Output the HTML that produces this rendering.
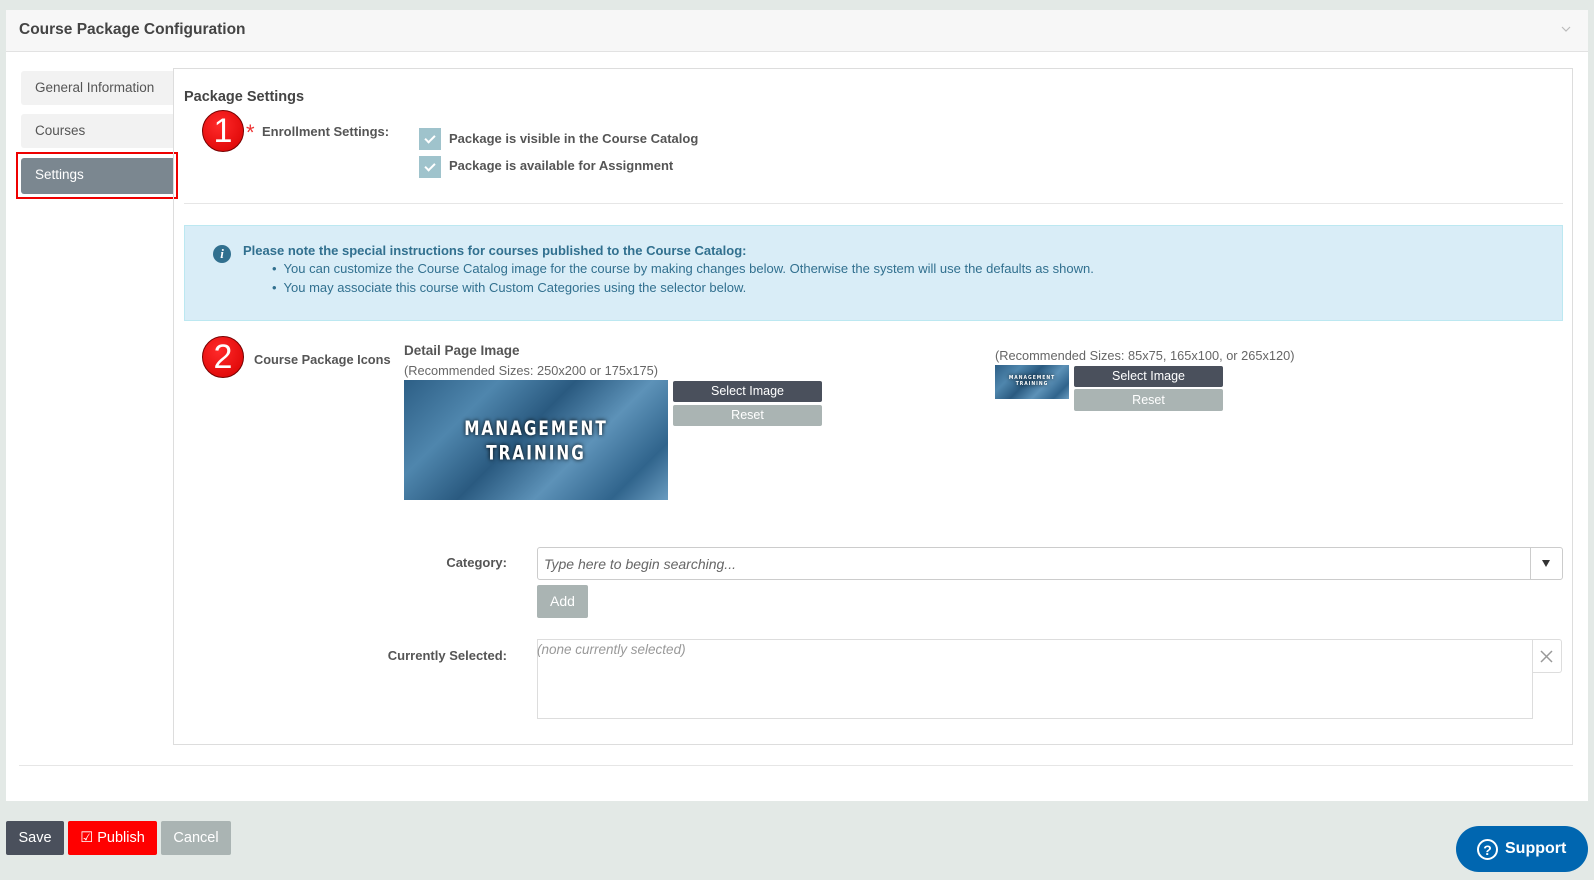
<!DOCTYPE html>
<html><head><meta charset="utf-8"><style>
*{box-sizing:border-box;margin:0;padding:0}
body{width:1594px;height:880px;background:#e3e9e6;font-family:"Liberation Sans",Arial,sans-serif;position:relative;overflow:hidden;color:#555}
.a{position:absolute}
.panel{left:6px;top:10px;width:1582px;height:791px;background:#fff}
.hdr{left:6px;top:10px;width:1582px;height:42px;background:#f7f7f7;border-bottom:1px solid #e2e2e2}
.b{font-weight:bold}
.tab{left:21px;width:152px;height:34px;background:#f2f2f2;font-size:13px;color:#555;padding:9px 0 0 14px;border-radius:3px 0 0 3px}
.cb{width:22px;height:22px;background:#9fc3cc}
.cb:after{content:"";position:absolute;left:8px;top:5px;width:4px;height:8px;border:solid #fff;border-width:0 2px 2px 0;transform:rotate(45deg)}
.circ{width:42px;height:42px;border-radius:50%;background:radial-gradient(circle at 40% 35%,#ff2a2a,#d80000);border:1.5px solid #700;color:#fff;font-size:34px;text-align:center;line-height:40px;font-family:"Liberation Sans",sans-serif}
.btn{color:#fff;font-size:12.5px;text-align:center;border-radius:2px}
.img{background:linear-gradient(135deg,#2d5f86 0%,#4f86ad 25%,#2a5a80 45%,#5d92b8 65%,#30648c 85%,#6a9cc0 100%);overflow:hidden}
.img .t{position:absolute;width:100%;text-align:center;color:#fff;font-family:"DejaVu Sans Condensed","Liberation Sans Narrow",sans-serif;font-weight:bold;text-shadow:0 0 4px #000}
</style></head><body>
<div class="a panel"></div>
<div class="a hdr"></div>
<div class="a b" style="left:19px;top:21px;font-size:15.5px;color:#444">Course Package Configuration</div>
<svg class="a" style="left:1561px;top:26px" width="10" height="7"><path d="M1 1l4 4 4-4" stroke="#bbb" fill="none" stroke-width="1.2"/></svg>

<div class="a tab" style="top:71px;font-size:13.5px">General Information</div>
<div class="a tab" style="top:114px;font-size:13.5px">Courses</div>
<div class="a tab" style="top:158px;background:#7b8790;color:#fff;height:36px;font-size:13.5px">Settings</div>
<div class="a" style="left:16px;top:152px;width:162px;height:47px;border:2px solid #e00"></div>

<div class="a" style="left:173px;top:68px;width:1400px;height:677px;border:1px solid #ddd"></div>
<div class="a b" style="left:184px;top:89px;font-size:14.5px;color:#444">Package Settings</div>
<div class="a circ" style="left:202px;top:110px">1</div>
<div class="a" style="left:246px;top:122px;color:#e33;font-size:22px;line-height:22px">*</div>
<div class="a b" style="left:262px;top:124px;font-size:13px;color:#555">Enrollment Settings:</div>
<div class="a cb" style="left:419px;top:128px"></div>
<div class="a b" style="left:449px;top:131px;font-size:13px;color:#555">Package is visible in the Course Catalog</div>
<div class="a cb" style="left:419px;top:156px"></div>
<div class="a b" style="left:449px;top:158px;font-size:13px;color:#555">Package is available for Assignment</div>
<div class="a" style="left:184px;top:203px;width:1379px;border-top:1px solid #e6e6e6"></div>

<div class="a" style="left:184px;top:225px;width:1379px;height:96px;background:#d9edf7;border:1px solid #bce8f1"></div>
<div class="a" style="left:213px;top:245px;width:18px;height:18px;border-radius:50%;background:#31708f;color:#fff;font:italic bold 13px 'Liberation Serif',serif;text-align:center;line-height:18px">i</div>
<div class="a b" style="left:243px;top:243px;font-size:13px;color:#31708f">Please note the special instructions for courses published to the Course Catalog:</div>
<div class="a" style="left:272px;top:261px;font-size:13px;color:#31708f">•&nbsp; You can customize the Course Catalog image for the course by making changes below. Otherwise the system will use the defaults as shown.</div>
<div class="a" style="left:272px;top:280px;font-size:13px;color:#31708f">•&nbsp; You may associate this course with Custom Categories using the selector below.</div>

<div class="a circ" style="left:202px;top:336px">2</div>
<div class="a b" style="left:254px;top:352px;font-size:12.8px;color:#555">Course Package Icons</div>
<div class="a b" style="left:404px;top:343px;font-size:13.5px;color:#555">Detail Page Image</div>
<div class="a" style="left:404px;top:363px;font-size:12.8px;color:#666">(Recommended Sizes: 250x200 or 175x175)</div>
<div class="a img" style="left:404px;top:380px;width:264px;height:120px"><div class="t" style="top:41px;font-size:17px;letter-spacing:2px;line-height:21px;transform:scaleY(1.15)">MANAGEMENT<br>TRAINING</div></div>
<div class="a btn" style="left:673px;top:381px;width:149px;height:21px;background:#4a505c;line-height:21px">Select Image</div>
<div class="a btn" style="left:673px;top:405px;width:149px;height:21px;background:#aab4b3;line-height:21px">Reset</div>

<div class="a" style="left:995px;top:348px;font-size:12.8px;color:#666">(Recommended Sizes: 85x75, 165x100, or 265x120)</div>
<div class="a img" style="left:995px;top:365px;width:74px;height:34px"><div class="t" style="top:10px;font-size:5px;letter-spacing:1px;line-height:6px">MANAGEMENT<br>TRAINING</div></div>
<div class="a btn" style="left:1074px;top:366px;width:149px;height:21px;background:#4a505c;line-height:21px">Select Image</div>
<div class="a btn" style="left:1074px;top:389px;width:149px;height:22px;background:#aab4b3;line-height:22px">Reset</div>

<div class="a b" style="left:400px;top:555px;width:107px;text-align:right;font-size:13px;color:#555">Category:</div>
<div class="a" style="left:537px;top:547px;width:1026px;height:33px;border:1px solid #ccc;border-radius:3px"></div>
<div class="a" style="left:1530px;top:547px;height:33px;border-left:1px solid #ccc"></div>
<div class="a" style="left:1542px;top:560px;width:0;height:0;border-left:4px solid transparent;border-right:4px solid transparent;border-top:7px solid #333"></div>
<div class="a" style="left:544px;top:556px;font-size:14px;font-style:italic;color:#666">Type here to begin searching...</div>
<div class="a btn" style="left:537px;top:585px;width:51px;height:33px;background:#aab4b3;line-height:33px;font-size:14px">Add</div>
<div class="a b" style="left:360px;top:648px;width:147px;text-align:right;font-size:13px;color:#555">Currently Selected:</div>
<div class="a" style="left:537px;top:639px;width:996px;height:80px;border:1px solid #ddd"></div>
<div class="a" style="left:537px;top:642px;font-size:13.5px;font-style:italic;color:#999">(none currently selected)</div>
<div class="a" style="left:1532px;top:639px;width:30px;height:34px;border:1px solid #ddd;border-left:none;border-radius:0 3px 3px 0"></div>
<svg class="a" style="left:1540px;top:650px" width="13" height="13"><path d="M1 1l11 11M12 1L1 12" stroke="#999" stroke-width="1.5"/></svg>
<div class="a" style="left:19px;top:765px;width:1554px;border-top:1px solid #e6e6e6"></div>

<div class="a btn" style="left:6px;top:821px;width:58px;height:34px;background:#4a505c;line-height:34px;font-size:14.5px">Save</div>
<div class="a btn" style="left:68px;top:821px;width:89px;height:34px;background:#f00;line-height:34px;font-size:14.5px">☑ Publish</div>
<div class="a btn" style="left:161px;top:821px;width:70px;height:34px;background:#aab4b3;line-height:34px;font-size:14.5px">Cancel</div>
<div class="a" style="left:1456px;top:826px;width:132px;height:46px;border-radius:23px;background:#0066b0;color:#fff"></div>
<div class="a" style="left:1477px;top:839px;width:21px;height:21px;border:2px solid #fff;border-radius:50%;color:#fff;font:bold 14px 'Liberation Sans';text-align:center;line-height:18px">?</div>
<div class="a b" style="left:1505px;top:840px;color:#fff;font-size:16px">Support</div>
</body></html>
